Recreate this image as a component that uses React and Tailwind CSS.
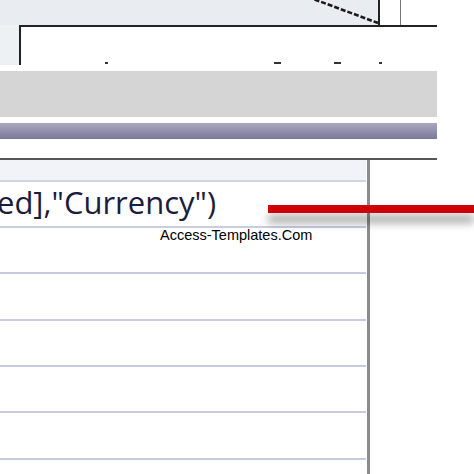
import React from 'react';

const rows = [46, 47, 46, 46, 47, 20];

export default function App() {
  return (
    <div className="relative w-[474px] h-[474px] overflow-hidden bg-white" style={{ fontFamily: '"Open Sans", sans-serif' }}>
      {/* design view strip at top */}
      <div className="flex h-[25px]">
        <div className="relative w-[378px] bg-[#e9edf1]">
          <svg className="absolute inset-0" width="378" height="25">
            <line x1="308" y1="-3" x2="378" y2="23" stroke="#1a1a1a" strokeWidth="2.6" strokeDasharray="5 2" />
          </svg>
        </div>
        <div className="w-[2px] bg-[#222]" />
        <div className="w-[20px] bg-white" />
        <div className="w-[1px] bg-[#777]" />
        <div className="flex-1 bg-white" />
      </div>

      <div className="flex h-[40px]">
        <div className="w-[19px] bg-[#eef1f4]" />
        <div className="relative w-[418px] border-l-2 border-t-2 border-[#222] bg-white">
          <span className="absolute left-[84px] top-[35px] w-[3px] h-[2px] bg-[#333]" />
          <span className="absolute left-[253px] top-[35px] w-[7px] h-[2px] bg-[#333]" />
          <span className="absolute left-[313px] top-[35px] w-[7px] h-[2px] bg-[#333]" />
          <span className="absolute left-[358px] top-[35px] w-[3px] h-[2px] bg-[#333]" />
        </div>
      </div>

      {/* ribbon / toolbar bands */}
      <div className="w-[437px]">
        <div className="h-[6px] bg-white" />
        <div className="h-[46px] bg-[#d5d5d5]" />
        <div className="h-[6px] bg-white" />
        <div className="h-[16px] bg-gradient-to-b from-[#aaa8c0] to-[#7b7899]" />
        <div className="h-[19px] bg-white" />
        <div className="h-[2px] bg-[#555]" />
      </div>

      {/* property sheet */}
      <div className="flex">
        <div className="w-[366px] flex flex-col">
          <div className="h-[22px] bg-[#f1f3f8] border-b-2 border-[#cdd4e4]" />
          <div className="h-[46px] border-b-2 border-[#c9cde0] overflow-hidden whitespace-nowrap">
            <div className="ml-[-3px] pt-[5px] text-[31px] leading-none text-[#1c1c3c]">ed],"Currency")</div>
          </div>
          {rows.map((h, i) => (
            <div key={i} className="border-b-2 border-[#cacade]" style={{ height: h }} />
          ))}
        </div>
        <div className="w-[1px] bg-white" />
        <div className="w-[3px] h-[320px] bg-[#8c8c8c]" />
        <div className="flex-1 bg-white" />
      </div>

      {/* annotation arrow */}
      <div className="absolute left-[268px] top-[205px] w-[206px] h-[8px] bg-[#cf0000] shadow-[0_10px_9px_rgba(0,0,0,0.35)]" />

      {/* watermark */}
      <div className="absolute left-[160px] top-[228px] text-[14.5px] leading-none text-black" style={{ fontFamily: '"Liberation Sans", Arial, sans-serif' }}>
        Access-Templates.Com
      </div>
    </div>
  );
}
